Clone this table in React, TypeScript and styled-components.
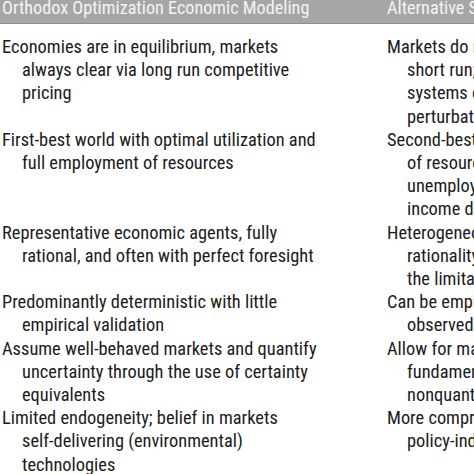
import { Fragment } from 'react';
import styled, { createGlobalStyle } from 'styled-components';

const GlobalStyle = createGlobalStyle`
  html, body {
    margin: 0;
    padding: 0;
    background: #ffffff;
  }
  body {
    width: 474px;
    height: 474px;
    overflow: hidden;
    font-family: 'Roboto Condensed', 'Liberation Sans', sans-serif;
    font-weight: 400;
  }
`;

const Page = styled.div`
  width: 474px;
  height: 474px;
  overflow: hidden;
`;

const HeaderBar = styled.div`
  display: grid;
  grid-template-columns: 385px 420px;
  height: 23px;
  background: #a6a6a6;
  border-bottom: 1px solid #8f8f8f;
  color: #f4f4f4;
  font-size: 18.2px;
  line-height: 16px;
  white-space: nowrap;
`;

const HeaderCell = styled.div`
  padding-left: 2px;
`;

const Body = styled.div`
  display: grid;
  grid-template-columns: 385px 420px;
  padding-top: 11px;
  color: #1b1b1b;
  font-size: 18.4px;
  line-height: 23.2px;
`;

const Cell = styled.div`
  padding-left: 2px;
  white-space: nowrap;
`;

const Line = styled.span<{ $indent?: boolean }>`
  display: block;
  padding-left: ${({ $indent }) => ($indent ? '20px' : '0')};
`;

const rows: [string[], string[]][] = [
  [
    ['Economies are in equilibrium, markets', 'always clear via long run competitive', 'pricing'],
    ['Markets do not necessarily clear in the', 'short run; economies are complex adaptive', 'systems evolving with external', 'perturbations'],
  ],
  [
    ['First-best world with optimal utilization and', 'full employment of resources'],
    ['Second-best world with suboptimal utilization', 'of resources, including involuntary', 'unemployment and unequal', 'income distribution'],
  ],
  [
    ['Representative economic agents, fully', 'rational, and often with perfect foresight'],
    ['Heterogeneous agents with bounded', 'rationality and learning, aware of', 'the limitations of foresight'],
  ],
  [
    ['Predominantly deterministic with little', 'empirical validation'],
    ['Can be empirically validated against', 'observed data'],
  ],
  [
    ['Assume well-behaved markets and quantify', 'uncertainty through the use of certainty', 'equivalents'],
    ['Allow for market failures and', 'fundamental uncertainty that is', 'nonquantifiable'],
  ],
  [
    ['Limited endogeneity; belief in markets', 'self-delivering (environmental)', 'technologies'],
    ['More comprehensive endogeneity;', 'policy-induced technological change'],
  ],
];

function Entry({ lines }: { lines: string[] }) {
  return (
    <Cell>
      {lines.map((l, i) => (
        <Line key={i} $indent={i > 0}>
          {l}
        </Line>
      ))}
    </Cell>
  );
}

export default function App() {
  return (
    <Page>
      <GlobalStyle />
      <HeaderBar>
        <HeaderCell>Orthodox Optimization Economic Modeling</HeaderCell>
        <HeaderCell>Alternative Systems Economic Modeling</HeaderCell>
      </HeaderBar>
      <Body>
        {rows.map(([left, right], i) => (
          <Fragment key={i}>
            <Entry lines={left} />
            <Entry lines={right} />
          </Fragment>
        ))}
      </Body>
    </Page>
  );
}
